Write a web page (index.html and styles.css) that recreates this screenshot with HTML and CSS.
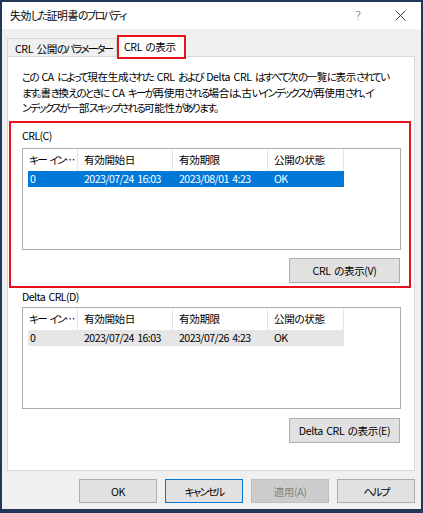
FILE: index.html
```html
<!DOCTYPE html>
<html lang="ja">
<head>
<meta charset="utf-8">
<title>失効した証明書のプロパティ</title>
<link rel="stylesheet" href="styles.css">
</head>
<body>
<div class="window">
  <div class="titlebar">
    <span class="title">失効<span class="kn">した</span>証明書<span class="kn">のプロパティ</span></span>
    <span class="ctl help">?</span>
    <span class="ctl close"><svg width="11" height="11" viewBox="0 0 11 11"><path d="M0.5 0.5 L10.5 10.5 M10.5 0.5 L0.5 10.5" stroke="#3a3a3a" stroke-width="1" fill="none"/></svg></span>
  </div>
  <div class="main">
    <div class="tabs">
      <div class="tab">CRL 公開<span class="kn">のパラメーター</span></div>
      <div class="tab selected">CRL の表示</div>
    </div>
    <div class="panel">
      <p class="desc"><span class="kn">この</span> CA <span class="kn">によって</span>現在生成<span class="kn">された</span> CRL <span class="kn">および</span> Delta CRL <span class="kn">はすべて</span>次<span class="kn">の</span>一覧<span class="kn">に</span>表示<span class="kn">されてい</span><br><span class="kn">ます。</span>書<span class="kn">き</span>換<span class="kn">えのときに</span> CA <span class="kn">キーが</span>再使用<span class="kn">される</span>場合<span class="kn">は、</span>古<span class="kn">いインデックスが</span>再使用<span class="kn">され、イ</span><br><span class="kn">ンデックスが</span>一部<span class="kn">スキップされる</span>可能性<span class="kn">があります。</span></p>
      <div class="highlight">
        <div class="label">CRL(C)</div>
        <div class="list">
          <div class="hdr">
            <div class="c c1"><span class="kn">キー</span> <span class="kn">イン…</span></div>
            <div class="c c2">有効開始日</div>
            <div class="c c3">有効期限</div>
            <div class="c c4">公開の状態</div>
          </div>
          <div class="row sel">
            <div class="c c1">0</div>
            <div class="c c2">2023/07/24 16:03</div>
            <div class="c c3">2023/08/01 4:23</div>
            <div class="c c4">OK</div>
          </div>
        </div>
        <div class="btnrow"><button class="btn wide">CRL の表示(V)</button></div>
      </div>
      <div class="group">
        <div class="label dlabel">Delta CRL(D)</div>
        <div class="list">
          <div class="hdr">
            <div class="c c1"><span class="kn">キー</span> <span class="kn">イン…</span></div>
            <div class="c c2">有効開始日</div>
            <div class="c c3">有効期限</div>
            <div class="c c4">公開の状態</div>
          </div>
          <div class="row inactive">
            <div class="c c1">0</div>
            <div class="c c2">2023/07/24 16:03</div>
            <div class="c c3">2023/07/26 4:23</div>
            <div class="c c4">OK</div>
          </div>
        </div>
        <div class="btnrow drow"><button class="btn wide">Delta CRL の表示(E)</button></div>
      </div>
    </div>
    <div class="footer">
      <button class="btn">OK</button>
      <button class="btn focus"><span class="kn">キャンセル</span></button>
      <button class="btn disabled">適用(A)</button>
      <button class="btn"><span class="kn">ヘルプ</span></button>
    </div>
  </div>
</div>
</body>
</html>
```
FILE: styles.css
```css
html, body {
  margin: 0;
  padding: 0;
}
body {
  font-family: "Noto Sans CJK JP", sans-serif;
  font-size: 10.6px;
  font-feature-settings: "palt" 1;
  letter-spacing: -0.4px;
  word-spacing: 1.5px;
  color: #000;
  background: #fff;
}
.kn {
  letter-spacing: -1.7px;
}
.window {
  width: 423px;
  height: 513px;
  box-sizing: border-box;
  border: 2px solid #22375a;
  border-bottom-width: 4px;
  display: flex;
  flex-direction: column;
  background: #f0f0f0;
}
.titlebar {
  height: 27px;
  flex: none;
  background: #fff;
  display: flex;
  align-items: center;
  padding-left: 8px;
}
.title {
  flex: 1;
  font-size: 10.8px;
  line-height: 15px;
}
.title .kn {
  letter-spacing: -1.8px;
}
.ctl {
  width: 42px;
  height: 27px;
  display: flex;
  align-items: center;
  justify-content: center;
  color: #555;
}
.help {
  font-family: "DejaVu Sans", sans-serif;
  font-size: 12px;
  font-weight: 300;
}
.main {
  flex: 1;
  display: flex;
  flex-direction: column;
  padding: 0 6px 0 5px;
}
.tabs {
  margin-top: 5px;
  height: 22px;
  display: flex;
  align-items: flex-end;
}
.tab {
  height: 18px;
  box-sizing: border-box;
  width: 110px;
  border: 1px solid #d9d9d9;
  border-bottom: none;
  padding-left: 7px;
  line-height: 19px;
  white-space: nowrap;
  background: #f0f0f0;
}
.tab .kn {
  letter-spacing: -1.9px;
}
.tab.selected {
  width: 69px;
  height: 24px;
  margin-bottom: -3px;
  border: 2px solid #e8101a;
  background: #fff;
  padding-left: 5px;
  line-height: 20px;
  position: relative;
  z-index: 2;
}
.panel {
  height: 415px;
  box-sizing: border-box;
  border: 1px solid #d9d9d9;
  background: #fff;
  display: flex;
  flex-direction: column;
}
.desc {
  margin: 12px 0 0 14px;
  line-height: 15.5px;
  white-space: nowrap;
}
.highlight {
  margin: 5px 0 0 1px;
  width: 402px;
  box-sizing: border-box;
  border: 2px solid #e8101a;
  padding: 5px 8px 3px 11px;
}
.label {
  line-height: 15px;
  margin-bottom: 5px;
  letter-spacing: -0.55px;
}
.group {
  padding: 1px 13px 0 14px;
}
.dlabel {
  margin-bottom: 3px;
}
.list {
  width: 379px;
  height: 102px;
  box-sizing: border-box;
  border: 1px solid #adadad;
  background: #fff;
}
.hdr {
  display: flex;
  height: 22px;
  line-height: 22px;
}
.hdr .c {
  border-right: 1px solid #e5e5e5;
}
.c {
  box-sizing: border-box;
  padding-left: 6px;
  white-space: nowrap;
  overflow: hidden;
}
.c1 { width: 55px; }
.c2 { width: 95px; }
.c3 { width: 95px; }
.c4 { width: 76px; }
.row {
  display: flex;
  height: 16px;
  line-height: 16px;
  margin-left: 5px;
  width: 316px;
  letter-spacing: -0.55px;
}
.row .c1 {
  width: 50px;
  padding-left: 2px;
}
.row.sel {
  background: #0078d7;
  color: #fff;
}
.row.inactive {
  background: #e6e6e6;
}
.btnrow {
  display: flex;
  justify-content: flex-end;
  margin-top: 8px;
  padding-right: 1px;
}
.drow {
  margin-top: 9px;
}
.btn {
  font-family: "Noto Sans CJK JP", sans-serif;
  font-size: 10.6px;
  font-feature-settings: "palt" 1;
  letter-spacing: -0.4px;
  word-spacing: 1.5px;
  color: #000;
  width: 78px;
  height: 24px;
  box-sizing: border-box;
  border: 1px solid #adadad;
  background: #e1e1e1;
  padding: 0;
  margin: 0;
}
.btn .kn {
  letter-spacing: -1.8px;
}
.btn.wide {
  width: 111px;
  height: 25px;
}
.btn.focus {
  border-color: #0078d7;
}
.btn.disabled {
  background: #cccccc;
  border-color: #bfbfbf;
  color: #838383;
}
.footer {
  margin-top: 8px;
  display: flex;
  justify-content: flex-end;
  gap: 8px;
}
```
